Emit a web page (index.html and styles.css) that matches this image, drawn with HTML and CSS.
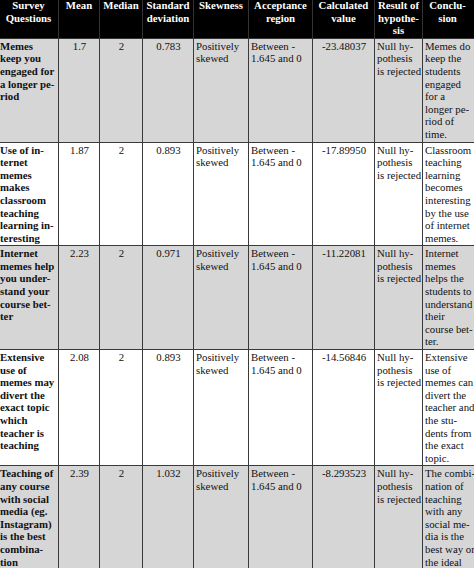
FILE: index.html
```html
<!DOCTYPE html>
<html>
<head>
<meta charset="utf-8">
<link rel="stylesheet" href="styles.css">
</head>
<body>
<table class="stats">
  <colgroup>
    <col class="c1"><col class="c2"><col class="c3"><col class="c4"><col class="c5"><col class="c6"><col class="c7"><col class="c8"><col class="c9">
  </colgroup>
  <thead>
    <tr>
      <th>Survey<br>Questions</th>
      <th>Mean</th>
      <th>Median</th>
      <th>Standard<br>deviation</th>
      <th>Skewness</th>
      <th>Acceptance<br>region</th>
      <th>Calculated<br>value</th>
      <th>Result of<br>hypothe-<br>sis</th>
      <th class="last">Conclu-<br>sion</th>
    </tr>
  </thead>
  <tbody>
    <tr class="grey">
      <td class="q">Memes<br>keep you<br>engaged for<br>a longer pe-<br>riod</td>
      <td class="num">1.7</td>
      <td class="num">2</td>
      <td class="num">0.783</td>
      <td>Positively<br>skewed</td>
      <td>Between -<br>1.645 and 0</td>
      <td class="num">-23.48037</td>
      <td>Null hy-<br>pothesis<br>is rejected</td>
      <td>Memes do<br>keep the<br>students<br>engaged<br>for a<br>longer pe-<br>riod of<br>time.</td>
    </tr>
    <tr>
      <td class="q">Use of in-<br>ternet<br>memes<br>makes<br>classroom<br>teaching<br>learning in-<br>teresting</td>
      <td class="num">1.87</td>
      <td class="num">2</td>
      <td class="num">0.893</td>
      <td>Positively<br>skewed</td>
      <td>Between -<br>1.645 and 0</td>
      <td class="num">-17.89950</td>
      <td>Null hy-<br>pothesis<br>is rejected</td>
      <td>Classroom<br>teaching<br>learning<br>becomes<br>interesting<br>by the use<br>of internet<br>memes.</td>
    </tr>
    <tr class="grey">
      <td class="q">Internet<br>memes help<br>you under-<br>stand your<br>course bet-<br>ter</td>
      <td class="num">2.23</td>
      <td class="num">2</td>
      <td class="num">0.971</td>
      <td>Positively<br>skewed</td>
      <td>Between -<br>1.645 and 0</td>
      <td class="num">-11.22081</td>
      <td>Null hy-<br>pothesis<br>is rejected</td>
      <td>Internet<br>memes<br>helps the<br>students to<br>understand<br>their<br>course bet-<br>ter.</td>
    </tr>
    <tr>
      <td class="q">Extensive<br>use of<br>memes may<br>divert the<br>exact topic<br>which<br>teacher is<br>teaching</td>
      <td class="num">2.08</td>
      <td class="num">2</td>
      <td class="num">0.893</td>
      <td>Positively<br>skewed</td>
      <td>Between -<br>1.645 and 0</td>
      <td class="num">-14.56846</td>
      <td>Null hy-<br>pothesis<br>is rejected</td>
      <td>Extensive<br>use of<br>memes can<br>divert the<br>teacher and<br>the stu-<br>dents from<br>the exact<br>topic.</td>
    </tr>
    <tr class="grey">
      <td class="q">Teaching of<br>any course<br>with social<br>media (eg.<br>Instagram)<br>is the best<br>combina-<br>tion</td>
      <td class="num">2.39</td>
      <td class="num">2</td>
      <td class="num">1.032</td>
      <td>Positively<br>skewed</td>
      <td>Between -<br>1.645 and 0</td>
      <td class="num">-8.293523</td>
      <td>Null hy-<br>pothesis<br>is rejected</td>
      <td>The combi-<br>nation of<br>teaching<br>with any<br>social me-<br>dia is the<br>best way or<br>the ideal<br>way of<br>learning.</td>
    </tr>
  </tbody>
</table>
</body>
</html>
```
FILE: styles.css
```css
html, body {
  margin: 0;
  padding: 0;
  overflow: hidden;
  background: #ffffff;
}
body {
  width: 474px;
  height: 568px;
}
.stats {
  margin-top: -3px;
  margin-left: -2px;
  border-collapse: collapse;
  table-layout: fixed;
  width: 484px;
  font-family: "Liberation Serif", "Times New Roman", serif;
  font-size: 10.8px;
  line-height: 12.6px;
  color: #111111;
}
.c1 { width: 60px; }
.c2 { width: 41px; }
.c3 { width: 43px; }
.c4 { width: 51px; }
.c5 { width: 55px; }
.c6 { width: 64px; }
.c7 { width: 62px; }
.c8 { width: 48px; }
.c9 { width: 60px; }
.stats th {
  background: #000000;
  color: #ffffff;
  font-weight: bold;
  text-align: center;
  vertical-align: top;
  padding: 1px 1px;
  border: 1.5px solid #333333;
  white-space: nowrap;
}
.stats th.last {
  padding-right: 11px;
}
.stats td {
  vertical-align: top;
  text-align: left;
  padding: 1px 1px 1px 2px;
  border: 1.5px solid #3a3a3a;
  white-space: nowrap;
  overflow: hidden;
}
.stats td.q {
  font-weight: bold;
  padding-left: 1px;
}
.stats td.num {
  text-align: center;
}
.grey td {
  background: #d6d6d6;
}
```
